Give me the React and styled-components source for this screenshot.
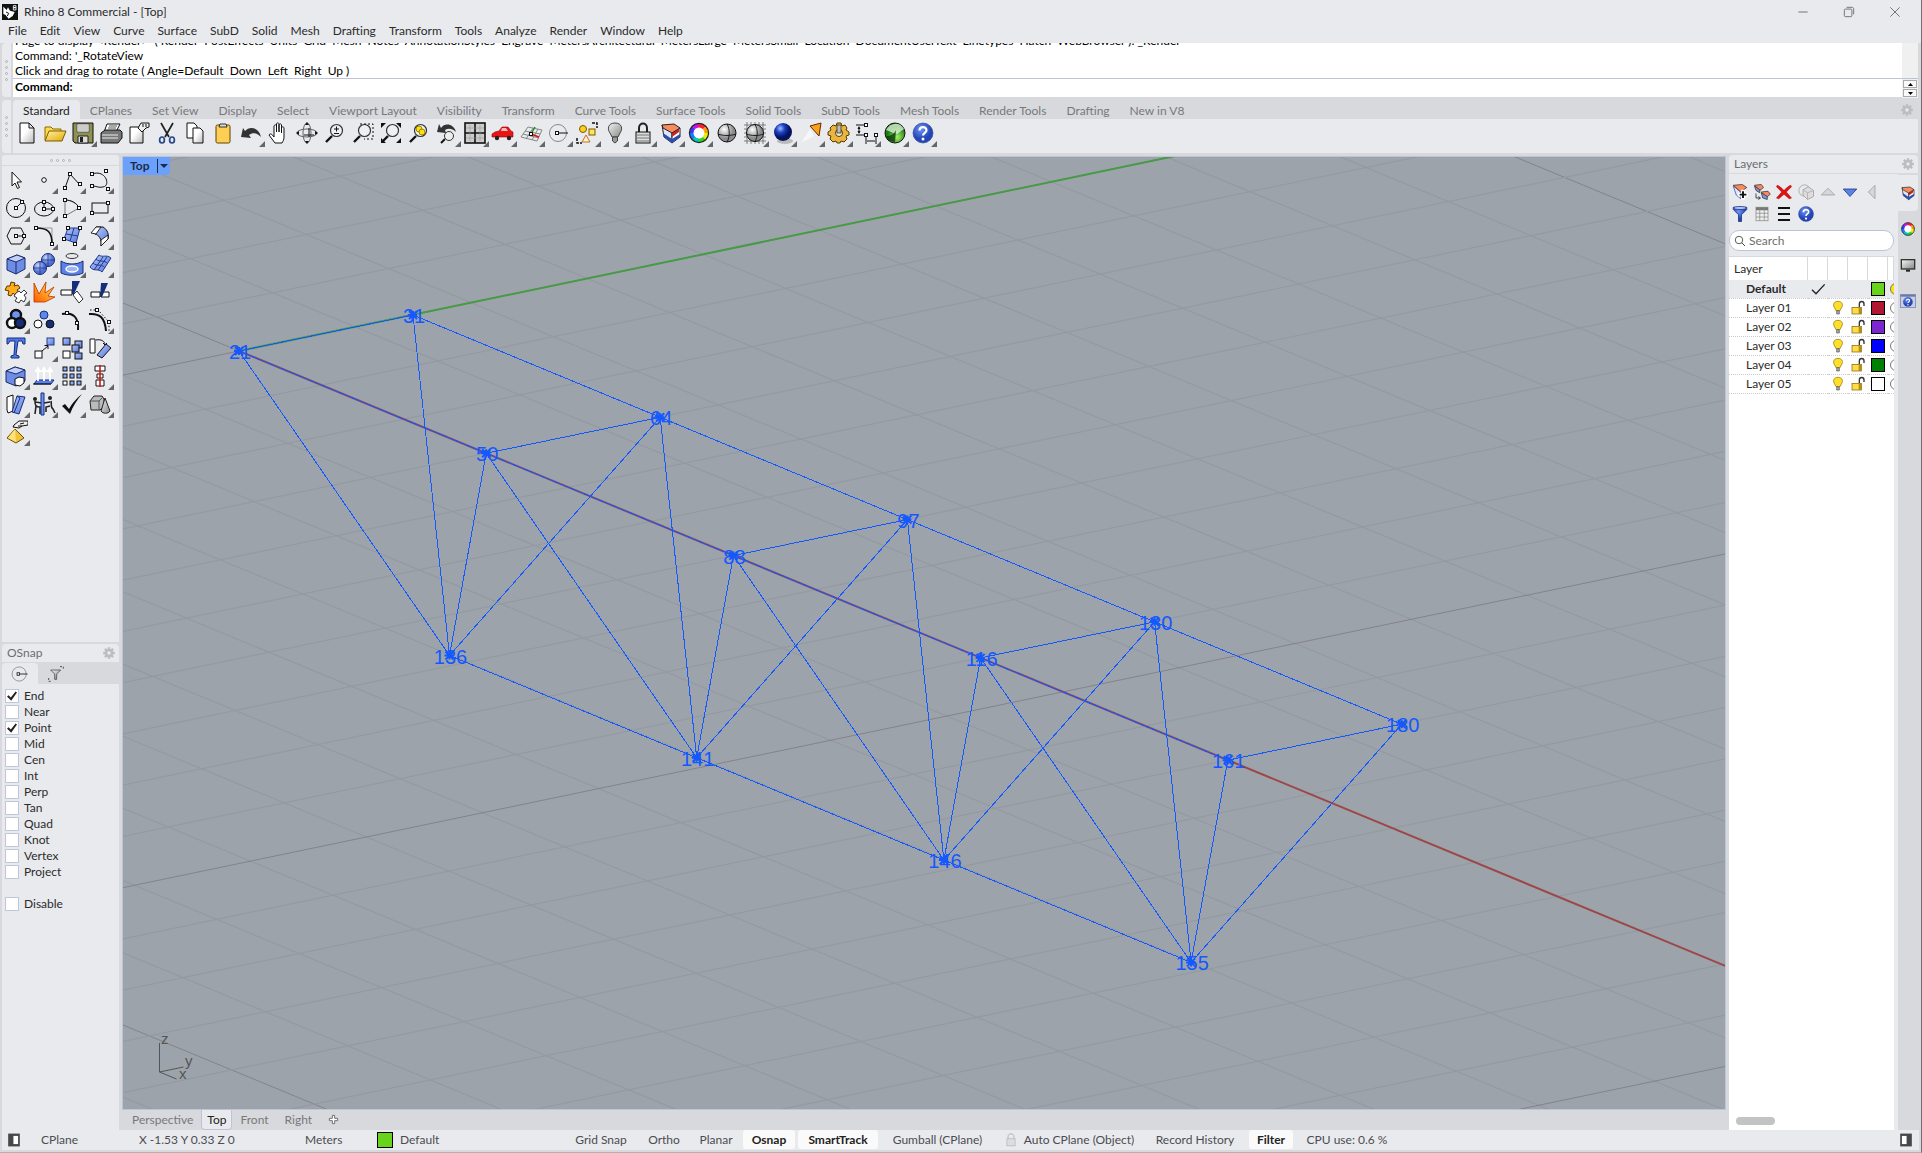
import React from "react";
import styled, { createGlobalStyle } from "styled-components";

const LIGHT = "#e9eaee";
const GREY = "#d8d9dc";
const LINE = "#bdc4da";

const Global = createGlobalStyle`
  *, *::before, *::after { box-sizing: border-box; }
  html, body, #root { height: 100%; }
  body {
    margin: 0;
    background: ${GREY};
    color: #2b2b2b;
    font: 12px/16px Lato, "Open Sans", sans-serif;
    overflow: hidden;
  }
  button, input { font: inherit; color: inherit; }
  button { border: 0; padding: 0; background: none; }
`;

/* ---------- drawings ---------- */

const Defs = () => (
  <DefsSvg aria-hidden="true">
    <defs>
      <linearGradient id="blue" x1="0" y1="0" x2="1" y2="1"><stop offset="0" stopColor="#b4c6fb" /><stop offset="1" stopColor="#5577dd" /></linearGradient>
      <linearGradient id="gold" x1="0" y1="0" x2="1" y2="1"><stop offset="0" stopColor="#fff3a8" /><stop offset="1" stopColor="#e2a800" /></linearGradient>
      <linearGradient id="paper" x1="0" y1="0" x2="1" y2="1"><stop offset="0.4" stopColor="#fff" /><stop offset="1" stopColor="#bbb" /></linearGradient>
      <linearGradient id="grey" x1="0" y1="0" x2="1" y2="1"><stop offset="0" stopColor="#f2f2f2" /><stop offset="1" stopColor="#8a8a8a" /></linearGradient>
      <linearGradient id="fire" x1="0" y1="1" x2="1" y2="0"><stop offset="0" stopColor="#ff5a00" /><stop offset="1" stopColor="#ffe94a" /></linearGradient>
      <radialGradient id="ballGrey" cx="0.35" cy="0.3"><stop offset="0" stopColor="#fff" /><stop offset="1" stopColor="#8b8b8b" /></radialGradient>
      <radialGradient id="ballBlue" cx="0.35" cy="0.3"><stop offset="0" stopColor="#9fc0ff" /><stop offset="0.5" stopColor="#1c3fc4" /><stop offset="1" stopColor="#06145c" /></radialGradient>
      <radialGradient id="ballGreen" cx="0.6" cy="0.7"><stop offset="0" stopColor="#a5f36a" /><stop offset="1" stopColor="#1b7a14" /></radialGradient>
      <radialGradient id="ballHelp" cx="0.4" cy="0.3"><stop offset="0" stopColor="#6f94f5" /><stop offset="1" stopColor="#2445b5" /></radialGradient>
      <radialGradient id="ballSoft" cx="0.35" cy="0.3"><stop offset="0" stopColor="#c4d3ff" /><stop offset="1" stopColor="#4c6fd8" /></radialGradient>
    </defs>
  </DefsSvg>
);

const K = "#111";
const Pt = ({ x, y }) => <rect x={x - 1.5} y={y - 1.5} width="3" height="3" fill="#fff" stroke={K} />;
const lens = (
  <>
    <path d="M3 21l6-6" stroke={K} strokeWidth="2.4" />
    <circle cx="13.5" cy="9.5" r="6" fill="#eef0f2" stroke="#333" strokeWidth="1.2" />
  </>
);
const wedge = (
  <>
    <path d="M3 4l10 5v13l-8-6z" fill="#dfe6fb" stroke="#222" />
    <path d="M13 12l8-5v9l-8 6z" fill="#fff" stroke="#222" />
    <path d="M4 12l9 6v4l-8-6zM13 18l8-5v3l-8 6z" fill="#2b4fae" />
    <path d="M13 12l7-4v3l-7 5z" fill="#d21f1f" />
    <path d="M3 4l12-1 6 4-8 5-9-5z" fill="#f98a5e" stroke="#222" />
  </>
);
const wheel = (
  <g fill="none" strokeWidth="4">
    {["#ff2020", "#ff9a00", "#e8ee00", "#30d020", "#00c8b8", "#1080ff", "#4430ff", "#d010e0"].map((c, i) => (
      <path key={c} d="M12 4.5A7.5 7.5 0 0 1 17.4 6.8" stroke={c} transform={`rotate(${i * 45} 12 12)`} />
    ))}
    <circle cx="12" cy="12" r="5.2" fill="#fff" strokeWidth="0" />
    <circle cx="12" cy="12" r="9.6" stroke="#222" strokeWidth="1.2" />
  </g>
);
const help = (
  <>
    <circle cx="12" cy="12" r="10" fill="url(#ballHelp)" stroke="#27409a" strokeWidth="0.6" />
    <path d="M8.5 9.5c0-4.5 7-4.5 7-.3 0 2.600-3.500 2.600-3.500 5.300" stroke="#fff" strokeWidth="2.200" fill="none" />
    <circle cx="12" cy="18" r="1.500" fill="#fff" />
  </>
);
const shaft = (
  <>
    <circle cx="11" cy="12" r="8.500" fill="none" stroke="#888" />
    <path d="M10 12h11" stroke={K} />
    <Pt x={10} y={12} />
  </>
);

const ICONS = {
  new: <path d="M5 2h9l5 5v15H5zM14 2v5h5" fill="url(#paper)" stroke={K} />,
  open: <><path d="M2 19V6h6l2 2h8v3" fill="#ffd94a" stroke="#8a6a00" /><path d="M2 20l4-10h17l-4 10z" fill="url(#gold)" stroke="#7a5a00" /></>,
  save: <><path d="M2 2h20v20H4l-2-2z" fill="#8f9152" stroke={K} /><path d="M6 3h12v8H6z" fill="#eee" stroke="#333" strokeWidth=".6" /><path d="M7 15h10v7H7z" fill="#ddd" stroke="#222" /><path d="M9 16h3v5H9z" fill="#222" /><path d="M7 5h10M7 7h10M7 9h10" stroke="#aaa" /></>,
  print: <><path d="M8 3h13l-4 8H5z" fill="#fff" stroke={K} /><path d="M2 12l4-3h15l2 2v6l-4 5H2z" fill="#777" stroke={K} /><path d="M3 14h16M3 17h16" stroke="#eee" /><path d="M10 5h8M9 7h8" stroke="#555" /></>,
  prefs: <><path d="M3 6h13v16H3z" fill="url(#paper)" stroke={K} /><path d="M11 7l3-5h8v4l-3 1-4 4z" fill="#eee" stroke={K} /><path d="M16 3v3M19 3v3" stroke={K} /></>,
  cut: <><path d="M6 2l8 14M18 2l-8 14" stroke="#222" strokeWidth="1.700" /><ellipse cx="7" cy="19" rx="2.400" ry="3" fill="none" stroke="#27468e" strokeWidth="1.700" /><ellipse cx="17" cy="19" rx="2.400" ry="3" fill="none" stroke="#27468e" strokeWidth="1.700" /></>,
  copy: <><path d="M4 2h7l3 3v12H4z" fill="#fff" stroke={K} /><path d="M10 7h7l3 3v12H10z" fill="url(#paper)" stroke={K} /></>,
  paste: <><rect x="5" y="4" width="14" height="18" rx="1.500" fill="#ffcf55" stroke="#5b4300" /><path d="M8 6l1-3h6l1 3z" fill="#ddd" stroke="#333" /></>,
  undo: <path d="M6 10c5-6 14-3 16 6-4-4-8-5-12-2l2 3-10-1 2-9z" fill="#333" />,
  pan: <path d="M8 22c-2-3-4-5-6-8 1-2 3-1 5 2V5c1-2 2.500-1 2.500 0v6-8c.500-2 2.500-1 2.500 0v8-7c.500-2 2.500-1 2.500 0v8-5c.500-2 2.500-1 2.500 0v9c0 3-1 4-2 6z" fill="#fff" stroke={K} />,
  rotate: <><ellipse cx="12" cy="12" rx="10" ry="4" fill="none" stroke="#666" /><ellipse cx="12" cy="12" rx="4" ry="10" fill="none" stroke="#666" /><path d="M14 7v9M9 14h10" stroke={K} /><path d="M1 12l3-2v4zM23 12l-3-2v4zM10 4l2-3 2 3zM10 20l2 3 2-3z" fill={K} /></>,
  zoomDyn: <>{lens}<path d="M11 8h5M13.500 5.500v5M11 12.500h5" stroke={K} /></>,
  zoomWin: <>{lens}<path d="M9 3h13v15h-9" fill="none" stroke={K} strokeDasharray="2 2" /></>,
  zoomExt: <>{lens}<path d="M2 7V2h5zM17 2h5v5zM22 17v5h-5zM7 22H2v-5z" fill={K} /></>,
  zoomSel: <>{lens}<circle cx="12" cy="8" r="3" fill="#ffe000" stroke="#6b5a00" strokeWidth=".7" /><circle cx="15" cy="11" r="3" fill="#ffe000" stroke="#6b5a00" strokeWidth=".7" /></>,
  zoomBack: <><path d="M6 22l4-4" stroke={K} strokeWidth="2" /><circle cx="14" cy="15" r="4.500" fill="#eee" stroke="#333" /><path d="M6 7c4-6 13-4 15 4-4-4-8-4-11-2l1 3-9-1 2-8z" fill="#333" /></>,
  views: <><rect x="2" y="2" width="20" height="20" fill="#ccc" stroke={K} strokeWidth="1.600" /><path d="M12 2v20M2 12h20" stroke={K} strokeWidth="1.600" /><path d="M7 4v16M17 4v16M3 7h18M3 17h18" stroke="#999" strokeWidth=".6" /></>,
  car: <><path d="M1 16v-3l3-2 4-1 3-4h6l3 4 2 1v5z" fill="#e81515" stroke="#900" strokeWidth=".6" /><path d="M11 7h4l2 3h-7z" fill="#fbb" /><circle cx="6" cy="17" r="2.200" fill="#222" /><circle cx="18" cy="17" r="2.200" fill="#222" /></>,
  cplane: <><path d="M2 16l7-10 14 3-5 11zM4 13l16 4M6 10l15 3M7 18l7-11M13 19l6-11" fill="none" stroke="#888" /><path d="M12 13l8 3" stroke="#e01010" strokeWidth="1.500" /><path d="M12 13l4-7" stroke="#109010" strokeWidth="1.500" /><Pt x={12} y={13} /></>,
  osnap: shaft,
  select: <><path d="M17 2h5v5M2 17v5h5" fill="none" stroke={K} strokeDasharray="3 1" strokeWidth="1.500" /><circle cx="8" cy="8" r="3.500" fill="#ffcf20" stroke="#7a5a00" /><rect x="14" y="8" width="6" height="6" fill="#ffe45a" stroke="#7a5a00" /><path d="M7 21l4-7 4 7z" fill="#fff0d8" stroke="#c07020" /></>,
  bulb: <><path d="M12 2c7 0 8 6 5 10l-2 4H9l-2-4C4 8 5 2 12 2z" fill="url(#grey)" stroke="#444" /><path d="M9.500 16h5v4l-2.500 2-2.500-2z" fill="#999" stroke="#444" /></>,
  lock: <><path d="M8 11V7c0-6 8-6 8 0v4" fill="none" stroke="#222" strokeWidth="2" /><rect x="5" y="11" width="14" height="11" fill="#ddd" stroke={K} /><path d="M6 14h12M6 17h12M6 20h12" stroke="#777" /></>,
  layers: wedge,
  wheel,
  shade: <><circle cx="12" cy="12" r="9" fill="url(#ballGrey)" stroke={K} /><path d="M3 13c5 2 13 2 18 0M12 3c3 5 3 13 0 18" stroke={K} fill="none" strokeWidth=".9" /></>,
  shadeGrid: <><path d="M1 4h22M1 8h22M1 12h22M1 16h22M1 20h22M4 1v22M8 1v22M12 1v22M16 1v22M20 1v22" stroke="#555" strokeWidth=".7" /><circle cx="12" cy="12" r="8.500" fill="url(#ballGrey)" stroke={K} /><path d="M3.500 13c5 2 12 2 17 0M12 3.500c3 5 3 12 0 17" fill="none" stroke={K} strokeWidth=".9" /></>,
  render: <><ellipse cx="14" cy="20" rx="8" ry="3" fill="#bbb" /><circle cx="12" cy="11" r="9" fill="url(#ballBlue)" /></>,
  spot: <><path d="M11 8L2 22l13-7z" fill="#fff" opacity=".6" /><path d="M11 5l11-3-2 13z" fill="#ff9d1c" stroke="#553000" /></>,
  gear: <><path d="M10 2h4l1 3 3-1 2 3-1 2 3 2v3l-3 1 1 3-3 3-3-1-1 2h-3l-1-2-3 1-3-3 1-3-3-1v-3l3-2-1-2 3-3 3 1z" fill="#e9b53e" stroke="#553a00" /><circle cx="12" cy="12" r="3.500" fill="#f5ecd0" stroke="#553a00" /><path d="M10 4h4v8h-4z" fill="#bbb" stroke="#222" strokeWidth=".7" /></>,
  dims: <><path d="M1 4h9M1 14h9M4 6v6M11 14v9M21 14v9M12 20h8" stroke={K} /><path d="M2.500 8L4 5l1.500 3zM2.500 10L4 13l1.500-3z" fill={K} /><Pt x={11} y={4} /><Pt x={11} y={14} /><Pt x={21} y={14} /></>,
  grass: <><circle cx="12" cy="12" r="10" fill="url(#ballGreen)" stroke={K} /><path d="M3 9c5-8 14-8 18-1l-7 5-6-2z" fill="#e7f5e0" opacity=".75" /><path d="M3 15c5 0 8-2 10-6l-1 12c-5 0-8-3-9-6z" fill="#0d3a0b" opacity=".8" /></>,
  help,

  cursor: <path d="M8 4v14l3-3 2.500 5.500 2-1-2.500-5.500h4.500z" fill="#fff" stroke={K} />,
  point: <circle cx="12" cy="12" r="2.300" fill="#fff" stroke={K} />,
  poly: <><path d="M5 20L10 6l10 11" fill="none" stroke={K} /><Pt x={5} y={20} /><Pt x={10} y={6} /><Pt x={20} y={16} /></>,
  curve: <><path d="M4 6c14-5 19 12 11 13-5 1-6-1-11-1" fill="none" stroke={K} /><Pt x={4} y={6} /><Pt x={4} y={18} /><Pt x={18} y={3} /><Pt x={20} y={21} /></>,
  circle: <><circle cx="12" cy="12" r="9.500" fill="none" stroke={K} /><path d="M12 12l6-6" stroke={K} /><Pt x={12} y={12} /><Pt x={18} y={6} /></>,
  ellipse: <><ellipse cx="12" cy="13" rx="9.500" ry="7" fill="none" stroke={K} /><path d="M12 13V6M12 13h9" stroke={K} /><Pt x={12} y={13} /><Pt x={12} y={6} /><Pt x={21} y={13} /></>,
  arc: <><path d="M5 4c6 0 12 3 14 8L5 20z" fill="none" stroke="#777" /><path d="M5 4c6 0 12 3 14 8" fill="none" stroke={K} /><Pt x={5} y={4} /><Pt x={5} y={20} /><Pt x={19} y={12} /></>,
  rect: <><rect x="4" y="7" width="16" height="10" fill="none" stroke={K} /><Pt x={4} y={17} /><Pt x={20} y={7} /></>,
  hex: <><path d="M7 4h10l4 8-4 8H7l-4-8z" fill="none" stroke={K} /><path d="M12 12h8" stroke={K} /><Pt x={12} y={12} /><Pt x={20} y={12} /></>,
  fillet: <><path d="M4 4h16v16" fill="none" stroke="#999" /><path d="M4 4c12 0 16 4 16 16" fill="none" stroke={K} strokeWidth="1.700" /><Pt x={4} y={4} /><Pt x={20} y={20} /></>,
  patch: <><path d="M8 4h12l-4 15-12-4z" fill="url(#blue)" stroke="#223a8a" /><path d="M14 4l-4 13M6 10l12 2" stroke="#223a8a" /><Pt x={8} y={4} /><Pt x={20} y={4} /><Pt x={4} y={15} /><Pt x={15} y={20} /></>,
  extrude: <><path d="M8 3h7c5 3 6 8 5 12l-7 7c1-7-2-11-6-12z" fill="url(#blue)" stroke={K} /><path d="M3 9l5-6h5L8 10zM13 16l7-5v4l-7 7z" fill="#fff" stroke={K} strokeWidth=".9" /></>,
  box: <><path d="M3 7l10-4 8 3v11l-9 5-9-4z" fill="#6d8ce6" stroke="#1c2d6b" /><path d="M3 7l9 3 9-4-8-3z" fill="#c1cffa" stroke="#1c2d6b" /><path d="M12 10v12" stroke="#1c2d6b" /></>,
  spheres: <><circle cx="16" cy="8" r="6.500" fill="url(#ballSoft)" stroke="#1c2d6b" /><circle cx="8" cy="16" r="6.500" fill="url(#ballSoft)" stroke="#1c2d6b" /><path d="M8 9.500v13M1.500 16h13M16 1.500v13M9.500 8h13" stroke="#1c2d6b" strokeWidth=".7" /></>,
  tube: <><ellipse cx="12" cy="4" rx="6" ry="2.500" fill="none" stroke="#333" /><path d="M1 9c6 4 16 4 22 0v12c-6 3-16 3-22 0z" fill="#5b82ea" stroke="#1c2d6b" /><ellipse cx="12" cy="17" rx="6" ry="3" fill="#9db4f5" stroke="#fff" strokeWidth="1.500" /></>,
  surface: <><path d="M2 15L11 3c4 3 7-1 12 3l-9 14c-4-4-8 0-12-5z" fill="url(#blue)" stroke="#223a8a" /><path d="M5 11c4 4 8 0 12 5M8 7c4 4 8 0 12 5M6 18l9-13M10 18l9-13" stroke="#223a8a" fill="none" /></>,
  puzzle: <><path d="M3 6h3l1-4 4 1-1 3 4-1 2 3-3 2 2 3-4 2-2-2-2 3-3-1 1-4-4-1z" fill="#ffae1a" stroke="#5b3600" /><path d="M12 13l3-2 2 2 3-3 3 3-3 2 2 3-2 4-3-2-2 3-4-2 2-3-3-2z" fill="#fff" stroke="#333" /></>,
  explode: <path d="M2 22V3l5 11L14 2l-1 11L22 7l-6 9 7 1-10 5z" fill="url(#fire)" stroke="#b83200" strokeWidth=".8" />,
  trim: <><path d="M1 10h11v5H1z" fill="#fff" stroke={K} /><path d="M12 1h8l-6 13h-2z" fill="#142e7c" /><path d="M13 15l4-4 6 8-4 4z" fill="#fff" stroke="#333" /></>,
  split: <><path d="M3 12h9v5H3zM13 12h8v5h-8z" fill="#fff" stroke={K} /><path d="M13 3h7l-6 14h-2z" fill="#142e7c" /></>,
  bool: <><circle cx="12" cy="7" r="5" fill="#6f93f0" stroke={K} strokeWidth="2.400" /><circle cx="8" cy="15" r="5" fill="#fff" stroke={K} strokeWidth="2.400" /><circle cx="16" cy="15" r="5" fill="#142e7c" stroke={K} strokeWidth="2.400" /></>,
  group: <><circle cx="12" cy="7" r="4" fill="#5f86ee" stroke="#142e7c" /><circle cx="6" cy="16" r="4" fill="#fff" stroke={K} /><circle cx="18" cy="16" r="4" fill="#142e7c" stroke={K} /></>,
  ptOn: <><path d="M2 6c11-2 17 3 16 16" fill="none" stroke={K} strokeWidth="2" /><Pt x={7} y={5} /><Pt x={17} y={15} /></>,
  offset: <><path d="M1 6c11-1 16 4 17 17" fill="none" stroke={K} strokeWidth="2" /><path d="M2 2h8l11 12v9" fill="none" stroke={K} strokeDasharray="1.500 2" /><Pt x={9} y={2} /><Pt x={21} y={14} /></>,
  text: <path d="M3 2h18v6h-2l-1-3h-4l-2 14 3 1v2H7v-2l3-1 1-14H6L4 8H3z" fill="#4f78e6" stroke="#142e7c" />,
  move: <><rect x="3" y="15" width="7" height="7" fill="#fff" stroke={K} /><rect x="15" y="2" width="7" height="7" fill="url(#blue)" stroke="#223a8a" /><path d="M10 15l6-5M12.500 9.500H16v3.500" stroke={K} fill="none" /></>,
  copies: <><rect x="3" y="2" width="7" height="7" fill="url(#blue)" stroke={K} /><rect x="3" y="15" width="7" height="7" fill="#fff" stroke={K} /><rect x="15" y="5" width="7" height="7" fill="url(#blue)" stroke={K} /><rect x="12" y="9" width="7" height="7" fill="url(#blue)" stroke={K} /><rect x="15" y="17" width="7" height="6" fill="url(#blue)" stroke={K} /></>,
  orient: <><path d="M2 3h5v14H2z" fill="#fff" stroke={K} /><path d="M9 19l9-11 5 4-9 10z" fill="url(#blue)" stroke={K} /><path d="M8 4c5-1 9 1 9 5M15 7l2 2 2-2" fill="none" stroke={K} /></>,
  solidEdit: <><path d="M2 7l9-4 10 3v11l-9 5-10-4z" fill="#6d8ce6" stroke="#1c2d6b" /><path d="M2 7l10 3 9-4-10-3z" fill="#c1cffa" stroke="#1c2d6b" /><path d="M11 15l4-2 5 1v5l-4 3-5-1z" fill="#fff" stroke={K} /></>,
  arrows: <><path d="M2 20l3-4h17l-3 4z" fill="#5b82ea" stroke="#142e7c" /><path d="M1 20h18" stroke={K} /><path d="M6 17V6M12 17V6M18 17V6M3.500 8L6 4l2.500 4M9.500 8L12 4l2.500 4M15.500 8L18 4l2.500 4" stroke="#fff" strokeWidth="1.800" fill="none" /></>,
  array: <>{[3, 10, 17].map((y) => [3, 10, 17].map((x) => <rect key={`${x}${y}`} x={x} y={y} width="4" height="4" fill={x === 3 && y === 17 ? "#fff" : "#8eaaf5"} stroke={K} />))}</>,
  align: <><path d="M7 2h10v5H7zM9 10h6v4H9zM8 16h8v6H8z" fill="#fff" stroke={K} /><path d="M12 1v22" stroke="#e01010" strokeWidth="1.600" /></>,
  shear: <><path d="M3 5l6-2v16l-5 2-1-3z" fill="#fff" stroke={K} /><path d="M13 4l8 1-6 17-7-2z" fill="url(#blue)" stroke="#142e7c" /><path d="M13 4l3 2-6 15" fill="none" stroke="#142e7c" /></>,
  mirror: <><circle cx="3" cy="7" r="2" fill="#222" /><circle cx="18" cy="6" r="2" fill="#222" /><path d="M3 9c0 5 1 6 5 6v7M3 10l7 1M19 9c1 4-1 6 2 8l2 4M18 10l-6 1M4 14l-1 8M18 14l-4 1v5" stroke="#222" strokeWidth="1.600" fill="none" /><path d="M9 1h3v22H9z" fill="#6f93f0" stroke="#142e7c" /></>,
  check: <path d="M2 14l3-2 4 5C13 10 17 6 22 2c-5 6-9 12-12 20z" fill={K} />,
  solids: <><path d="M2 9l4-5h8l2 3v7l-4 4H3z" fill="#bbb" stroke="#222" /><path d="M2 9h9l4-4M11 9v9" stroke="#555" fill="none" /><path d="M17 6l5 13c-2 3-7 3-9 0z" fill="url(#grey)" stroke="#222" /></>,
  pyramid: <><path d="M10 5l5-4h9v4l-6 1-3 2-6-1z" fill="#eee" stroke={K} /><path d="M16 4l4-1M14 6h4" stroke={K} /><path d="M11 9l9 9-8 5-9-5z" fill="#f0c33c" stroke="#6b4d00" /><path d="M11 9l1 13-8-4z" fill="#ffe27a" /></>,

  layerNew: <><path d="M3 4l4 12 6 5v-9z" fill="#dfe6fb" stroke="#3450a0" /><path d="M3 3l12-1 6 4-8 6z" fill="#f98a5e" stroke="#333" /><path d="M16 9v13M9.500 15.500h13" stroke="#fff" strokeWidth="5" /><path d="M16 11v9M11.500 15.500h9" stroke={K} strokeWidth="2.600" /></>,
  layerSub: <><path d="M2 3l9-1 3 4-5 4z" fill="#f98a5e" stroke="#333" /><path d="M2 4l2 6 5 3V9z" fill="#7d96dd" stroke="#333" /><path d="M11 12l9-1 3 4-5 4z" fill="#f98a5e" stroke="#333" /><path d="M11 13l2 7 6 2v-4z" fill="#7d96dd" stroke="#333" /><path d="M4 14v6h5M7 18l3 2-3 2" fill="none" stroke={K} /></>,
  del: <path d="M3 3c3 1 6 4 9 7 3-3 6-6 9-7l1 2-7 7c3 3 5 6 7 8l-3 1-7-6-7 6-3-1 7-8-7-7z" fill="#e01212" stroke="#a00000" strokeWidth=".7" />,
  dup: <><circle cx="10" cy="10" r="7.500" fill="none" stroke="#999" /><path d="M8 9l7-4 7 5v8l-8 4-6-6z" fill="#ddd" stroke="#999" /><path d="M8 9l6 4 8-3M14 13v9" stroke="#aaa" fill="none" /></>,
  up: <path d="M3 16l9-9 9 9z" fill="#d6d6d8" stroke="#999" />,
  down: <path d="M3 8h18l-9 10z" fill="#5b84e8" stroke="#142e7c" />,
  left: <path d="M16 3v18L7 12z" fill="#d6d6d8" stroke="#999" />,
  funnel: <><path d="M3 3h18v3l-7 7v9h-4v-9L3 6z" fill="url(#ballHelp)" stroke="#142e7c" /><ellipse cx="12" cy="4" rx="9" ry="2" fill="#b4c6fb" stroke="#142e7c" /></>,
  grid: <><rect x="4" y="3" width="16" height="18" fill="#eee" stroke="#888" /><path d="M4 5h16" stroke="#777" strokeWidth="4" /><path d="M4 11h16M4 16h16M9 4v17M15 4v17" stroke="#888" /></>,
  menu: <path d="M4 4h16M4 12h16M4 20h16" stroke="#111" strokeWidth="2.400" />,
  monitor: <><rect x="1" y="3" width="22" height="16" fill="#333" /><rect x="3" y="5" width="18" height="12" fill="url(#grey)" /><path d="M9 19h6v3H9z" fill="#222" /></>,
  helpWin: <><rect x="1" y="2" width="22" height="20" fill="#c9d0e4" stroke="#6a7aa8" /><path d="M1 4h22" stroke="#6a7aa8" strokeWidth="3" /><g transform="translate(3.500 5) scale(.7)">{help}</g></>,
  cog: <><path d="M12 2v20M2 12h20M5 5l14 14M19 5L5 19" stroke="#bcbdc1" strokeWidth="4" /><circle cx="12" cy="12" r="7" fill="#bcbdc1" /><circle cx="12" cy="12" r="3" fill={LIGHT} /></>,
  filter: <><path d="M4 6h15l-6 6v8h-3v-8z" fill="url(#grey)" stroke="#333" /><path d="M18 1h5v5M1 18v5h5" fill="none" stroke={K} strokeDasharray="3 2" /></>,
  lockGrey: <><path d="M7 10V6c0-6 10-6 10 0v4" fill="none" stroke="#aaa" strokeWidth="1.500" /><rect x="5" y="10" width="14" height="12" fill="#ddd" stroke="#aaa" /></>,
  lampOn: <><path d="M12 2c7 0 8 6 5 10l-2 4H9l-2-4C4 8 5 2 12 2z" fill="#ffdf2a" stroke="#8a6a00" /><path d="M10 16h4v5h-4z" fill="#aaa" stroke="#555" /></>,
  unlock: <><path d="M14 11V6c0-5 7-5 7 0v3" fill="none" stroke="#333" strokeWidth="2" /><rect x="3" y="11" width="14" height="10" fill="#ffdc4a" stroke="#7a5a00" /><path d="M13 11h4v10h-4z" fill="#b98d10" /></>,
  tick: <path d="M3 13l6 6L22 5" fill="none" stroke="#222" strokeWidth="2" />,
  search: <><circle cx="10" cy="10" r="7.500" fill="none" stroke="#333" strokeWidth="1.600" /><path d="M15.500 15.500L22 22" stroke="#333" strokeWidth="1.800" /></>,
  plus: <path d="M9.500 3h5v6.500H21v5h-6.500V21h-5v-6.500H3v-5h6.500z" fill="#fff" stroke="#666" strokeWidth="2" />,
  sideLeft: <><path d="M2 1h20v22H2z" fill="#454849" /><path d="M11 5h8v14h-8z" fill="#fff" /></>,
  sideRight: <><path d="M2 1h20v22H2z" fill="#454849" /><path d="M5 5h8v14H5z" fill="#fff" /></>,
  rhino: <><path d="M0 0h24v24H0z" fill="#111" /><path d="M2 4l5 5 2-4 3 5 7 2-3 6-6 4-5-6-3-1z" fill="#fff" /><path d="M6 12l4 2-2 4" fill="none" stroke="#111" strokeWidth="1.500" /><path d="M17 2.500h4v3h-4zM17 5.500h4V9h-4z" fill="none" stroke="#fff" strokeWidth="1.300" /></>,
  minimize: <path d="M4 12h16" stroke="#666" strokeWidth="1.500" />,
  restore: <><rect x="4" y="7" width="13" height="13" rx="2" fill="none" stroke="#666" strokeWidth="1.500" /><path d="M8 4h9c2 0 3 1 3 3v9" fill="none" stroke="#666" strokeWidth="1.500" /></>,
  close: <path d="M4 4l16 16M20 4L4 20" stroke="#666" strokeWidth="1.500" />,
};

const Icon = ({ name, size = 24 }) => (
  <svg width={size} height={size} viewBox="0 0 24 24" fill="none" aria-hidden="true">{ICONS[name]}</svg>
);

/* ---------- shell ---------- */

const DefsSvg = styled.svg`position: absolute; width: 0; height: 0;`;

const Window = styled.div`
  display: flex;
  flex-direction: column;
  height: 100vh;
  border-right: 1px solid #6e6f73;
  border-bottom: 1px solid #b5b0b0;
`;

const TitleBar = styled.header`
  display: flex;
  align-items: center;
  gap: 6px;
  height: 22px;
  padding: 1px 0 0 2px;
  background: ${LIGHT};
`;
const Title = styled.span`flex: 1;`;
const WinButton = styled.button`
  display: grid;
  place-items: center;
  width: 46px;
  height: 20px;
`;
const WinButtons = styled.div`display: flex; padding-right: 3px;`;

const MenuBar = styled.nav`
  display: flex;
  gap: 13px;
  height: 21px;
  padding: 0 8px;
  background: ${LIGHT};
`;
const MenuItem = styled.button`height: 18px;`;

const Strip = styled.div`display: flex; gap: 2px; margin: ${(p) => p.$margin}; height: ${(p) => p.$h}px;`;
const Grip = styled.div`
  display: flex;
  flex-direction: ${(p) => (p.$row ? "row" : "column")};
  align-items: center;
  justify-content: center;
  gap: 3px;
  ${(p) => (p.$row ? `height: 11px; border-bottom: 1px solid ${GREY};` : "width: 9px;")}
  border-radius: ${(p) => (p.$row ? "4px 4px 0 0" : "4px 0 0 4px")};
  background: ${LIGHT};
`;
const Dot = styled.i`width: 3px; height: 3px; border: 1px solid #b0b1b6; border-radius: 50%;`;
const Dots = ({ row }) => <Grip $row={row}><Dot /><Dot /><Dot /><Dot /></Grip>;

const Command = styled.section`
  flex: 1;
  display: grid;
  grid-template-rows: 36px 18px;
  min-width: 0;
  background: #fff;
  color: #000;
`;
const HistoryRow = styled.div`
  display: grid;
  grid-template-columns: 1fr 16px;
  border-bottom: 1px solid ${LINE};
`;
const HistoryBox = styled.div`
  display: flex;
  flex-direction: column;
  justify-content: flex-end;
  height: 35px;
  padding-left: 2px;
  overflow: hidden;
  line-height: 15px;
  white-space: pre;
`;
const ScrollTrack = styled.div`background: #f0f0f1;`;
const Prompt = styled.label`
  display: grid;
  grid-template-columns: auto 1fr 16px;
  padding-left: 2px;
  font-weight: 700;
`;
const PromptInput = styled.input`border: 0; outline: 0; padding: 0 4px; background: none;`;
const Spin = styled.div`display: grid; gap: 1px; padding: 1px; background: #f0f0f1;`;
const SpinButton = styled.button`
  display: grid;
  place-items: center;
  height: 8px;
  border: 1px solid #aaa;
  background: #fafafa;
`;

const Toolbars = styled.section`flex: 1; display: flex; flex-direction: column; min-width: 0;`;
const TabRow = styled.div`display: flex; align-items: stretch; height: 19px; background: ${GREY};`;
const ToolTab = styled.button`
  padding: 0 10px;
  height: 19px;
  line-height: 22px;
  border-radius: 4px 4px 0 0;
  color: ${(p) => (p.$on ? "#222" : "#77787b")};
  background: ${(p) => (p.$on ? LIGHT : "transparent")};
  white-space: nowrap;
`;
const Fill = styled.span`flex: 1;`;
const CogButton = styled.button`display: grid; place-items: center; width: 22px;`;
const ToolRow = styled.div`display: flex; height: 34px; background: ${LIGHT};`;
const Tool = styled.button`
  position: relative;
  display: grid;
  place-items: center;
  width: 28px;
  height: 28px;
  ${(p) => p.$fly && `&::after {
    content: "";
    position: absolute;
    right: 0;
    bottom: 0;
    border: 3px solid #666;
    border-top-color: transparent;
    border-left-color: transparent;
  }`}
`;

const Body = styled.main`flex: 1; display: grid; grid-template-columns: 117px 1fr 189px; min-height: 0; padding: 0 3px 0 2px;`;
const LeftCol = styled.aside`display: flex; flex-direction: column; gap: 2px; padding-top: 2px; min-height: 0;`;
const ToolPanel = styled.section`flex: 0 0 487px; border-radius: 4px 4px 0 0; background: ${LIGHT};`;
const ToolGrid = styled.div`display: grid; grid-template-columns: repeat(4, 28px); grid-auto-rows: 28px;`;
const Panel = styled.section`flex: 1; display: flex; flex-direction: column; border-radius: 4px 4px 0 0; background: ${LIGHT}; min-height: 0;`;
const PanelTitle = styled.h2`
  display: flex;
  align-items: center;
  justify-content: space-between;
  margin: 0;
  height: 19px;
  padding: 0 3px 0 5px;
  border-bottom: 1px solid ${GREY};
  color: #6c6d70;
  font-size: 12px;
  font-weight: 400;
`;
const SnapTabs = styled.div`display: flex; height: 21px; background: ${GREY};`;
const SnapTab = styled.button`
  display: grid;
  place-items: center;
  width: 36px;
  border-radius: 4px 4px 0 0;
  background: ${(p) => (p.$on ? LIGHT : "transparent")};
`;
const SnapList = styled.div`display: flex; flex-direction: column; padding: 4px 3px;`;
const Snap = styled.label`
  display: flex;
  align-items: center;
  gap: 5px;
  height: 16px;
  margin-top: ${(p) => (p.$apart ? 16 : 0)}px;
`;
const Check = styled.input`
  appearance: none;
  display: grid;
  place-items: center;
  width: 14px;
  height: 14px;
  margin: 0;
  border: 1px solid #c0c6dc;
  background: #fff;
  &:checked::before {
    content: "";
    width: 10px;
    height: 10px;
    background: #222;
    clip-path: polygon(0 55%, 16% 42%, 38% 66%, 86% 4%, 100% 14%, 42% 98%);
  }
`;

const Center = styled.section`
  display: grid;
  grid-template-rows: 1fr 20px;
  padding: 3px 3px 0 3px;
  min-width: 0;
`;
const Viewport = styled.div`
  position: relative;
  overflow: hidden;
  border: 1px solid ${LINE};
  background: #9da3aa;
`;
const Scene = styled.svg`
  display: block;
  width: 100%;
  height: 100%;
  font: 20px "Liberation Sans", Arial, sans-serif;
`;
const ViewTitle = styled.button`
  position: absolute;
  top: 0;
  left: 0;
  display: flex;
  align-items: center;
  gap: 8px;
  height: 18px;
  padding: 0 2px 0 7px;
  border-radius: 0 0 4px 0;
  background: #6ba1fb;
  font-weight: 700;
  color: #1b2c4a;
`;
const ViewArrow = styled.span`
  display: grid;
  place-items: center;
  height: 14px;
  padding-left: 2px;
  border-left: 1px solid #1b2c4a;
`;
const ViewTabs = styled.div`display: flex; align-items: stretch; padding-left: 2px; color: #77787b;`;
const ViewTab = styled.button`
  display: flex;
  align-items: center;
  padding: 0 ${(p) => (p.$on ? 5 : 7)}px;
  border: 1px solid ${(p) => (p.$on ? LINE : "transparent")};
  border-top: 0;
  border-radius: 0 0 4px 4px;
  color: ${(p) => (p.$on ? "#222" : "inherit")};
  background: ${(p) => (p.$on ? LIGHT : "transparent")};
`;

const RightCol = styled.aside`display: flex; flex-direction: column; padding-top: 2px; min-height: 0;`;
const LayerBody = styled.div`flex: 1; display: grid; grid-template-columns: 1fr 20px; min-height: 0;`;
const LayerMain = styled.div`display: flex; flex-direction: column; min-height: 0; padding-right: 4px;`;
const LayerTools = styled.div`display: grid; grid-template-columns: repeat(7, 22px); grid-auto-rows: 22px; padding-top: 7px;`;
const LayerTool = styled.button`display: grid; place-items: center;`;
const SearchBox = styled.label`
  display: flex;
  align-items: center;
  gap: 3px;
  height: 21px;
  margin: 5px 0 5px;
  padding: 0 4px;
  border: 1px solid ${LINE};
  border-radius: 10px;
  background: #fff;
  & > svg { flex: none; }
`;
const SearchInput = styled.input`
  width: 100%;
  border: 0;
  outline: 0;
  padding: 0;
  background: none;
  &::placeholder { color: #6e6e6e; opacity: 1; }
`;
const TableArea = styled.div`
  flex: 1;
  display: flex;
  flex-direction: column;
  justify-content: space-between;
  overflow: hidden;
  background: #fff;
`;
const Table = styled.table`
  width: 100%;
  table-layout: fixed;
  border-collapse: collapse;
`;
const Th = styled.th`
  width: ${(p) => p.$w || "auto"};
  height: 23px;
  padding: 2px 0 0 5px;
  border-right: 1px solid ${GREY};
  border-top: 1px solid ${GREY};
  text-align: left;
  font-weight: 400;
`;
const Tr = styled.tr`
  height: 19px;
  background: ${(p) => (p.$on ? LIGHT : "#fff")};
  font-weight: ${(p) => (p.$on ? 700 : 400)};
`;
const Td = styled.td`
  height: 19px;
  padding: 0 0 0 ${(p) => p.$pad || 0}px;
  border-bottom: 1px dotted #ccc;
  overflow: hidden;
  line-height: 16px;
  white-space: nowrap;
  & > svg { display: block; margin: 0 auto; }
`;
const Swatch = styled.span`
  display: block;
  width: ${(p) => p.$size}px;
  height: ${(p) => p.$size}px;
  margin: ${(p) => p.$margin || 0};
  border: 1px solid #000;
  background: ${(p) => p.$color};
`;
const Material = styled.span`
  display: block;
  width: 12px;
  height: 12px;
  margin-left: 2px;
  border: 1px solid #777;
  border-radius: 50%;
  background: ${(p) => p.$color};
`;
const Thumb = styled.div`width: 39px; height: 8px; margin: 0 0 5px 7px; border-radius: 4px; background: #c2c3c5;`;
const SideTabs = styled.div`display: flex; flex-direction: column; padding-top: 1px; background: ${GREY};`;
const SideTab = styled.button`
  display: grid;
  place-items: center;
  height: 36px;
  border-radius: 0 0 4px 0;
  background: ${(p) => (p.$on ? LIGHT : "transparent")};
`;

const StatusBar = styled.footer`
  display: flex;
  height: 22px;
  margin: 0 2px;
  padding: 0 6px 0 5px;
  border-bottom: 2px solid ${GREY};
  background: ${LIGHT};
  color: #4b4c50;
`;
const Cell = styled.span`
  display: flex;
  align-items: center;
  gap: 7px;
  width: ${(p) => p.$w}px;
  white-space: nowrap;
`;
const Toggle = styled.button`
  display: flex;
  align-items: center;
  justify-content: center;
  gap: 6px;
  width: ${(p) => p.$w}px;
  height: 19px;
  margin: 0 2px 0 1px;
  border-radius: 3px;
  white-space: nowrap;
  background: ${(p) => (p.$on ? "#fafafa" : "transparent")};
  font-weight: ${(p) => (p.$on ? 700 : 400)};
  color: ${(p) => (p.$on ? "#222" : "#4b4c50")};
`;

/* ---------- data ---------- */

const MENUS = ["File", "Edit", "View", "Curve", "Surface", "SubD", "Solid", "Mesh", "Drafting", "Transform", "Tools", "Analyze", "Render", "Window", "Help"];
const TABS = ["Standard", "CPlanes", "Set View", "Display", "Select", "Viewport Layout", "Visibility", "Transform", "Curve Tools", "Surface Tools", "Solid Tools", "SubD Tools", "Mesh Tools", "Render Tools", "Drafting", "New in V8"];
/* A trailing * marks a tool that has a flyout. */
const TOOLBAR = "new open save* print prefs cut copy paste undo* pan rotate zoomDyn zoomWin zoomExt zoomSel zoomBack* views* car* cplane* osnap* select* bulb* lock* layers* wheel* shade shadeGrid* render* spot* gear* dims* grass* help*".split(" ");
const SIDE = "cursor point* poly* curve* circle* ellipse* arc* rect* hex* fillet* patch* extrude* box* spheres* tube* surface* puzzle* explode trim split bool* group ptOn offset* text move* copies orient solidEdit* arrows* array* align* shear* mirror* check* solids* pyramid*".split(" ");
const SNAPS = ["End", "Near", "Point", "Mid", "Cen", "Int", "Perp", "Tan", "Quad", "Knot", "Vertex", "Project", "Disable"];
const LAYERS = [
  { name: "Default", color: "#67d41b", current: true, material: "#ffe600" },
  { name: "Layer 01", color: "#b01733", material: "#fff" },
  { name: "Layer 02", color: "#7c26cf", material: "#fff" },
  { name: "Layer 03", color: "#0000ff", material: "#fff" },
  { name: "Layer 04", color: "#008000", material: "#fff" },
  { name: "Layer 05", color: "#ffffff", material: "#fff" },
];
const LAYER_TOOLS = ["layerNew", "layerSub", "del", "dup", "up", "down", "left", "funnel", "grid", "menu", "help"];
const TOGGLES = [
  ["Grid Snap", 70], ["Ortho", 50], ["Planar", 48], ["Osnap", 52, true], ["SmartTrack", 80, true],
  ["Gumball (CPlane)", 113], ["Auto CPlane (Object)", 144], ["Record History", 102], ["Filter", 44, true], ["CPU use: 0.6 %", 102],
];

/* ---------- scene: truss on the construction plane ---------- */

const O = [116, 194];
const STEP = [247.2, 102.3];
const SX = 0.4137;
const SY = -0.2083;
const row = (dx, dy) => [0, 1, 2, 3, 4].map((i) => [O[0] + dx + STEP[0] * i, O[1] + dy + STEP[1] * i]);
const A = row(0, 0);
const B = row(174, -36);
const C = row(210.5, 304.5).slice(0, 4);
const NODES = [
  ...A.map((p, i) => [...p, ["21", "50", "88", "116", "161"][i]]),
  ...B.map((p, i) => [...p, ["31", "64", "97", "130", "180"][i]]),
  ...C.map((p, i) => [...p, ["136", "141", "146", "155"][i]]),
];
const EDGES = [[A[0], A[4]], [B[0], B[4]], [C[0], C[3]], ...A.map((p, i) => [p, B[i]])];
C.forEach((c, i) => EDGES.push([c, A[i]], [c, A[i + 1]], [c, B[i]], [c, B[i + 1]]));

const FAR = 4000;
const slanted = (y, m, key, major) => (
  <line key={key} x1="0" y1={y} x2={FAR} y2={y + m * FAR} stroke={major ? "#85838a" : "#949aa1"} strokeWidth={major ? 1 : 1.2} />
);
const range = (a, b) => Array.from({ length: b - a + 1 }, (_, i) => a + i);

const SceneView = () => (
  <Scene role="img" aria-label="Truss model">
    {range(-30, 30).map((k) => slanted(O[1] - SX * O[0] + 72.2 * k, SX, `x${k}`, k % 10 === 0))}
    {range(-8, 40).map((k) => slanted(O[1] - SY * O[0] + 51.25 * k, SY, `y${k}`, k % 10 === 0))}
    <line x1={O[0]} y1={O[1]} x2={FAR} y2={O[1] + SX * (FAR - O[0])} stroke="#9c4848" strokeWidth="2" />
    <line x1={O[0]} y1={O[1]} x2={FAR} y2={O[1] + SY * (FAR - O[0])} stroke="#479a47" strokeWidth="2" />
    <g stroke="#1458ff" shapeRendering="crispEdges">
      {EDGES.map(([p, q], i) => <line key={i} x1={p[0]} y1={p[1]} x2={q[0]} y2={q[1]} />)}
    </g>
    {NODES.map(([x, y, label]) => (
      <g key={label}>
        <path d={`M${x - 5} ${y}h9M${x - 4} ${y - 4}l8 8M${x + 4} ${y - 4}l-8 8M${x} ${y - 4}v8`} stroke="#1458ff" strokeWidth="2" />
        <text x={x + 1} y={y + 8} textAnchor="middle" fill="#1458ff">{label}</text>
      </g>
    ))}
    <g stroke="#555" fill="none"><path d="M36.500 886v29l24-5M36.500 915l17 7" /></g>
    <g fill="#555" fontSize="15"><text x="38" y="887">z</text><text x="62" y="909">y</text><text x="56" y="922">x</text></g>
  </Scene>
);

const ToolButton = ({ id }) => {
  const fly = id.endsWith("*");
  const name = id.replace("*", "");
  return <Tool $fly={fly} aria-label={name}><Icon name={name} /></Tool>;
};

export default function App() {
  return (
    <Window>
      <Global />
      <Defs />
      <TitleBar>
        <Icon name="rhino" size={16} />
        <Title>Rhino 8 Commercial - [Top]</Title>
        <WinButtons>
          {["minimize", "restore", "close"].map((n) => <WinButton key={n} aria-label={n}><Icon name={n} size={14} /></WinButton>)}
        </WinButtons>
      </TitleBar>
      <MenuBar>{MENUS.map((m) => <MenuItem key={m}>{m}</MenuItem>)}</MenuBar>

      <Strip $h={54} $margin="0 3px 3px 2px">
        <Dots />
        <Command>
          <HistoryRow>
            <HistoryBox>
              <div>{"Page to display <Render>  ( Render  PostEffects  Units  Grid  Mesh  Notes  AnnotationStyles  Engrave  MetersArchitectural  MetersLarge  MetersSmall  Location  DocumentUserText  Linetypes  Hatch  WebBrowser ): _Render"}</div>
              <div>Command: '_RotateView</div>
              <div>{"Click and drag to rotate ( Angle=Default  Down  Left  Right  Up )"}</div>
            </HistoryBox>
            <ScrollTrack />
          </HistoryRow>
          <Prompt>
            Command:
            <PromptInput />
            <Spin>
              <SpinButton aria-label="Previous"><svg width="5" height="3"><path d="M0 3L2.500 0 5 3z" /></svg></SpinButton>
              <SpinButton aria-label="Next"><svg width="5" height="3"><path d="M0 0l2.500 3L5 0z" /></svg></SpinButton>
            </Spin>
          </Prompt>
        </Command>
      </Strip>

      <Strip $h={53} $margin="0 3px 0 2px">
        <Dots />
        <Toolbars>
          <TabRow>
            {TABS.map((t, i) => <ToolTab key={t} $on={i === 0}>{t}</ToolTab>)}
            <Fill />
            <CogButton aria-label="Toolbar options"><Icon name="cog" size={14} /></CogButton>
          </TabRow>
          <ToolRow>{TOOLBAR.map((t) => <ToolButton key={t} id={t} />)}</ToolRow>
        </Toolbars>
      </Strip>

      <Body>
        <LeftCol>
          <ToolPanel>
            <Dots row />
            <ToolGrid>{SIDE.map((t) => <ToolButton key={t} id={t} />)}</ToolGrid>
          </ToolPanel>
          <Panel>
            <PanelTitle>OSnap<Icon name="cog" size={14} /></PanelTitle>
            <SnapTabs>
              <SnapTab $on aria-label="Object snaps"><Icon name="osnap" size={20} /></SnapTab>
              <SnapTab aria-label="Selection filter"><Icon name="filter" size={16} /></SnapTab>
            </SnapTabs>
            <SnapList>
              {SNAPS.map((s) => (
                <Snap key={s} $apart={s === "Disable"}>
                  <Check type="checkbox" defaultChecked={s === "End" || s === "Point"} />
                  {s}
                </Snap>
              ))}
            </SnapList>
          </Panel>
        </LeftCol>

        <Center>
          <Viewport>
            <SceneView />
            <ViewTitle>
              Top
              <ViewArrow><svg width="8" height="4"><path d="M0 0h8L4 4z" fill="#1b2c4a" /></svg></ViewArrow>
            </ViewTitle>
          </Viewport>
          <ViewTabs>
            {["Perspective", "Top", "Front", "Right"].map((t) => <ViewTab key={t} $on={t === "Top"}>{t}</ViewTab>)}
            <ViewTab aria-label="New viewport"><Icon name="plus" size={11} /></ViewTab>
          </ViewTabs>
        </Center>

        <RightCol>
          <Panel>
            <PanelTitle>Layers<Icon name="cog" size={14} /></PanelTitle>
            <LayerBody>
              <LayerMain>
                <LayerTools>
                  {LAYER_TOOLS.map((n) => <LayerTool key={n} aria-label={n}><Icon name={n} size={18} /></LayerTool>)}
                </LayerTools>
                <SearchBox>
                  <Icon name="search" size={12} />
                  <SearchInput placeholder="Search" aria-label="Search layers" />
                </SearchBox>
                <TableArea>
                  <Table>
                    <thead>
                      <tr><Th>Layer</Th><Th $w="20px" /><Th $w="20px" /><Th $w="20px" /><Th $w="20px" /><Th $w="4px" /></tr>
                    </thead>
                    <tbody>
                      {LAYERS.map((l) => (
                        <Tr key={l.name} $on={l.current}>
                          <Td $pad={17}>{l.name}</Td>
                          <Td>{l.current && <Icon name="tick" size={16} />}</Td>
                          <Td>{!l.current && <Icon name="lampOn" size={16} />}</Td>
                          <Td>{!l.current && <Icon name="unlock" size={16} />}</Td>
                          <Td><Swatch $size={14} $margin="0 auto" $color={l.color} /></Td>
                          <Td><Material $color={l.material} /></Td>
                        </Tr>
                      ))}
                    </tbody>
                  </Table>
                  <Thumb />
                </TableArea>
              </LayerMain>
              <SideTabs>
                {["layers", "wheel", "monitor", "helpWin"].map((n, i) => <SideTab key={n} $on={i === 0} aria-label={n}><Icon name={n} size={16} /></SideTab>)}
              </SideTabs>
            </LayerBody>
          </Panel>
        </RightCol>
      </Body>

      <StatusBar>
        <Cell $w={34}><Icon name="sideLeft" size={14} /></Cell>
        <Cell $w={98}>CPlane</Cell>
        <Cell $w={166}>X -1.53 Y 0.33 Z 0</Cell>
        <Cell $w={72}>Meters</Cell>
        <Cell $w={188}><Swatch $size={16} $color="#67d41b" />Default</Cell>
        {TOGGLES.map(([t, w, on]) => (
          <Toggle key={t} $w={w} $on={on}>{t.startsWith("Auto") && <Icon name="lockGrey" size={14} />}{t}</Toggle>
        ))}
        <Fill />
        <Cell $w={14}><Icon name="sideRight" size={14} /></Cell>
      </StatusBar>
    </Window>
  );
}
